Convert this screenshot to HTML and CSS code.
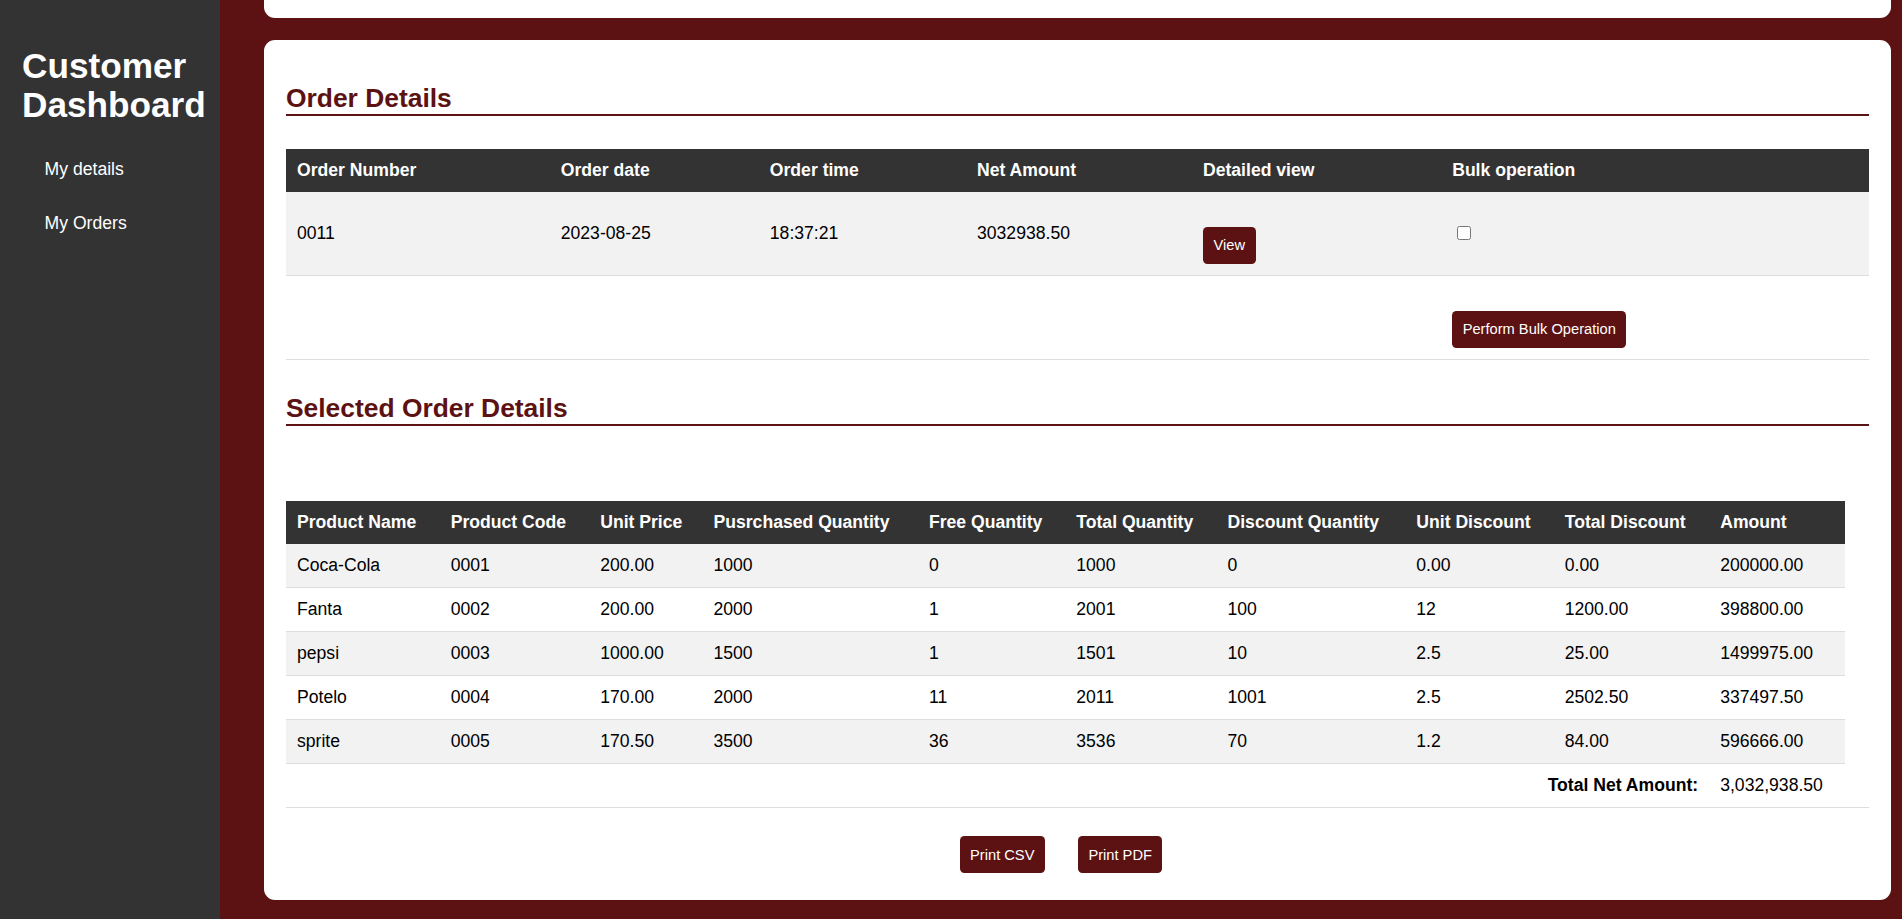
FILE: index.html
```html
<!DOCTYPE html>
<html lang="en">
<head>
<meta charset="utf-8">
<title>Customer Dashboard</title>
<link rel="stylesheet" href="styles.css">
</head>
<body>
<div class="layout">
  <aside class="sidebar">
    <h1 class="brand">Customer Dashboard</h1>
    <ul class="nav">
      <li><a href="#">My details</a></li>
      <li><a href="#">My Orders</a></li>
    </ul>
  </aside>
  <main class="main">
    <div class="card card-top"></div>
    <section class="card card-orders">
      <h2 class="section-title">Order Details</h2>
      <table class="orders">
        <thead>
          <tr>
            <th>Order Number</th>
            <th>Order date</th>
            <th>Order time</th>
            <th>Net Amount</th>
            <th>Detailed view</th>
            <th>Bulk operation</th>
          </tr>
        </thead>
        <tbody>
          <tr class="stripe">
            <td>0011</td>
            <td>2023-08-25</td>
            <td>18:37:21</td>
            <td>3032938.50</td>
            <td class="btn-cell"><button class="btn">View</button></td>
            <td><input type="checkbox" class="check"></td>
          </tr>
          <tr>
            <td colspan="5"></td>
            <td class="btn-cell"><button class="btn">Perform Bulk Operation</button></td>
          </tr>
        </tbody>
      </table>

      <h2 class="section-title section-title-second">Selected Order Details</h2>
      <div class="items-wrap">
        <table class="items">
          <thead>
            <tr>
              <th>Product Name</th>
              <th>Product Code</th>
              <th>Unit Price</th>
              <th>Pusrchased Quantity</th>
              <th>Free Quantity</th>
              <th>Total Quantity</th>
              <th>Discount Quantity</th>
              <th>Unit Discount</th>
              <th>Total Discount</th>
              <th>Amount</th>
            </tr>
          </thead>
          <tbody>
            <tr>
              <td>Coca-Cola</td><td>0001</td><td>200.00</td><td>1000</td><td>0</td><td>1000</td><td>0</td><td>0.00</td><td>0.00</td><td>200000.00</td>
            </tr>
            <tr>
              <td>Fanta</td><td>0002</td><td>200.00</td><td>2000</td><td>1</td><td>2001</td><td>100</td><td>12</td><td>1200.00</td><td>398800.00</td>
            </tr>
            <tr>
              <td>pepsi</td><td>0003</td><td>1000.00</td><td>1500</td><td>1</td><td>1501</td><td>10</td><td>2.5</td><td>25.00</td><td>1499975.00</td>
            </tr>
            <tr>
              <td>Potelo</td><td>0004</td><td>170.00</td><td>2000</td><td>11</td><td>2011</td><td>1001</td><td>2.5</td><td>2502.50</td><td>337497.50</td>
            </tr>
            <tr>
              <td>sprite</td><td>0005</td><td>170.50</td><td>3500</td><td>36</td><td>3536</td><td>70</td><td>1.2</td><td>84.00</td><td>596666.00</td>
            </tr>
          </tbody>
          <tfoot>
            <tr>
              <td colspan="9" class="total-label">Total Net Amount:</td>
              <td>3,032,938.50</td>
            </tr>
          </tfoot>
        </table>
      </div>

      <div class="actions">
        <button class="btn">Print CSV</button>
        <button class="btn">Print PDF</button>
      </div>
    </section>
  </main>
</div>
</body>
</html>
```

FILE: styles.css
```css
* {
  box-sizing: border-box;
}

html, body {
  margin: 0;
  padding: 0;
}

body {
  font-family: "Liberation Sans", Arial, sans-serif;
  font-size: 17.6px;
  color: #000;
  background: #5c1212;
}

.layout {
  display: flex;
  height: 100vh;
  overflow: hidden;
}

/* Sidebar */
.sidebar {
  flex: 0 0 220px;
  width: 220px;
  background: #333333;
  color: #fff;
  padding: 22px;
}

.brand {
  font-size: 35.2px;
  font-weight: bold;
  line-height: 39px;
  margin: 24px 0 26px;
}

.nav {
  list-style: none;
  margin: 0;
  padding: 0 0 0 22.6px;
}

.nav li {
  padding: 8.8px 0;
  margin-bottom: 16.5px;
  line-height: 20.2px;
}

.nav a {
  color: #fff;
  text-decoration: none;
}

/* Main */
.main {
  flex: 1 1 auto;
  background: #5c1212;
  padding: 0 11px 0 44px;
  min-width: 0;
}

.card {
  background: #fff;
  border-radius: 11px;
}

.card-top {
  height: 18px;
  border-radius: 0 0 11px 11px;
  margin-bottom: 22px;
}

.card-orders {
  padding: 22px;
}

.section-title {
  font-size: 26.4px;
  font-weight: bold;
  line-height: 30px;
  color: #5c1212;
  margin: 21px 0 0;
  padding-bottom: 1px;
  border-bottom: 2.2px solid #5c1212;
}

.section-title-second {
  margin-top: 33px;
}

/* Tables */
table {
  border-collapse: collapse;
  font-size: 17.6px;
}

th {
  background: #333333;
  color: #fff;
  text-align: left;
  font-weight: bold;
  padding: 11.4px 11px;
  line-height: 20.2px;
}

td {
  padding: 11px;
  line-height: 20.2px;
  border-bottom: 1px solid #dddddd;
  text-align: left;
}

.orders {
  width: 100%;
  margin-top: 33px;
}

.stripe {
  background: #f2f2f2;
}

.btn-cell .btn {
  margin-top: 24px;
  vertical-align: top;
}

.check {
  width: 14.3px;
  height: 14.3px;
  margin: 3.3px 3.3px 3.3px 4.4px;
}

.items-wrap {
  margin-top: 75px;
  border-bottom: 1px solid #dddddd;
}

.items {
  width: calc(100% - 24px);
}

.items td {
  padding: 11.4px 11px;
}

.items tbody tr:nth-child(odd) {
  background: #f2f2f2;
}

.items tfoot td {
  border-bottom: none;
}

.total-label {
  text-align: right;
  font-weight: bold;
}

/* Buttons */
.btn {
  background: #5c1212;
  color: #fff;
  border: 0;
  border-radius: 4.4px;
  padding: 10.5px 10.5px;
  font-family: "Liberation Sans", Arial, sans-serif;
  font-size: 14.67px;
  line-height: normal;
  margin-right: 33px;
  cursor: pointer;
}

.actions {
  display: flex;
  justify-content: center;
  padding-top: 28.5px;
  margin-bottom: 5px;
}
```
